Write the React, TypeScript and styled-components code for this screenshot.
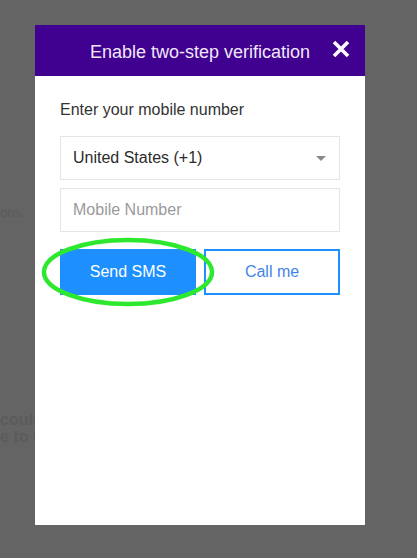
import React from "react";
import styled, { createGlobalStyle } from "styled-components";

const Global = createGlobalStyle`
  html, body { margin: 0; padding: 0; }
  body {
    width: 417px;
    height: 558px;
    overflow: hidden;
    background: #646464;
    font-family: "Liberation Sans", Arial, sans-serif;
  }
`;

const Page = styled.div`
  position: relative;
  width: 417px;
  height: 558px;
  background: #646464;
  overflow: hidden;
`;

const Backdrop = styled.div`
  padding-top: 204px;
  display: flex;
  flex-direction: column;
  align-items: flex-start;
`;

const BgLine = styled.div<{ $mt?: number; $bold?: boolean }>`
  margin-top: ${(p) => p.$mt ?? 0}px;
  font-size: ${(p) => (p.$bold ? 16 : 13)}px;
  line-height: 17px;
  white-space: nowrap;
  color: #5b5b5b;
  font-weight: ${(p) => (p.$bold ? 700 : 400)};
`;

const Modal = styled.div`
  position: absolute;
  left: 35px;
  top: 25px;
  width: 330px;
  height: 500px;
  background: #ffffff;
  display: flex;
  flex-direction: column;
`;

const Header = styled.div`
  height: 51px;
  background: #400090;
  display: flex;
  align-items: center;
  justify-content: center;
  position: relative;
  padding-top: 2px;
  box-sizing: border-box;
`;

const Title = styled.h1`
  margin: 0;
  font-size: 18px;
  font-weight: 400;
  line-height: 22px;
  color: #efe8fa;
`;

const Close = styled.button`
  position: absolute;
  right: 14px;
  top: 14px;
  width: 20px;
  height: 20px;
  padding: 0;
  border: none;
  background: transparent;
  display: flex;
  align-items: center;
  justify-content: center;
  cursor: pointer;
`;

const Body = styled.div`
  padding: 24px 25px 0 25px;
  display: flex;
  flex-direction: column;
`;

const Label = styled.div`
  font-size: 16px;
  line-height: 20px;
  color: #333333;
  margin-bottom: 16px;
`;

const Field = styled.div<{ $placeholder?: boolean }>`
  height: 44px;
  box-sizing: border-box;
  border: 1px solid #e4e4e4;
  display: flex;
  align-items: center;
  justify-content: space-between;
  padding: 0 12px 0 12px;
  font-size: 16px;
  color: ${(p) => (p.$placeholder ? "#9a9a9a" : "#2b2b2b")};
  margin-bottom: 8px;
`;

const Caret = styled.span`
  width: 0;
  height: 0;
  border-left: 5px solid transparent;
  border-right: 5px solid transparent;
  border-top: 5px solid #8a8a8a;
  margin-right: 1px;
`;

const Buttons = styled.div`
  margin-top: 9px;
  display: grid;
  grid-template-columns: 1fr 1fr;
  gap: 8px;
  position: relative;
`;

const Btn = styled.button<{ $primary?: boolean }>`
  height: 46px;
  box-sizing: border-box;
  font-family: "Liberation Sans", Arial, sans-serif;
  font-size: 16px;
  cursor: pointer;
  background: ${(p) => (p.$primary ? "#1e8fff" : "#ffffff")};
  color: ${(p) => (p.$primary ? "#ffffff" : "#3f86e8")};
  border: ${(p) => (p.$primary ? "none" : "2px solid #1e8fff")};
  padding: 0;
`;

const Highlight = styled.svg`
  position: absolute;
  left: -20px;
  top: -12px;
  pointer-events: none;
`;

export default function App() {
  return (
    <>
      <Global />
      <Page>
        <Backdrop>
          <BgLine>ons.</BgLine>
          <BgLine $mt={190} $bold>could</BgLine>
          <BgLine $bold>e to u</BgLine>
        </Backdrop>
        <Modal>
          <Header>
            <Title>Enable two-step verification</Title>
            <Close aria-label="Close">
              <svg width="18" height="18" viewBox="0 0 18 18">
                <path
                  d="M2 2 L16 16 M16 2 L2 16"
                  stroke="#ffffff"
                  strokeWidth="3.6"
                  strokeLinecap="butt"
                />
              </svg>
            </Close>
          </Header>
          <Body>
            <Label>Enter your mobile number</Label>
            <Field>
              <span>United States (+1)</span>
              <Caret />
            </Field>
            <Field $placeholder>Mobile Number</Field>
            <Buttons>
              <Btn $primary>Send SMS</Btn>
              <Btn>Call me</Btn>
              <Highlight width="180" height="74" viewBox="0 0 180 74">
                <ellipse
                  cx="88"
                  cy="35"
                  rx="84"
                  ry="32"
                  fill="none"
                  stroke="#2ee82e"
                  strokeWidth="4.5"
                />
              </Highlight>
            </Buttons>
          </Body>
        </Modal>
      </Page>
    </>
  );
}
